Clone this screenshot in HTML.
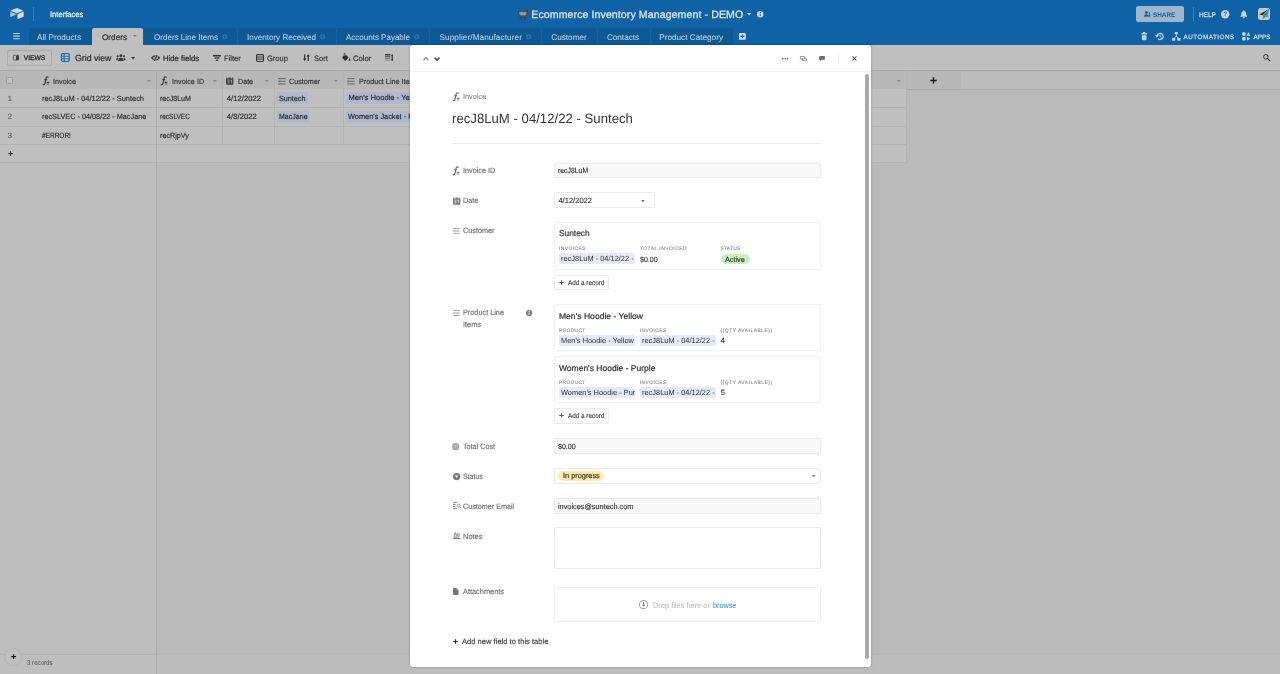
<!DOCTYPE html>
<html><head><meta charset="utf-8"><title>Orders - Airtable</title>
<style>
*{box-sizing:border-box;margin:0;padding:0}
html,body{width:1280px;height:674px;overflow:hidden;background:#bfbfbf;font-family:"Liberation Sans",sans-serif;font-size:8.6px;color:#2b2b2b}
.a{position:absolute;white-space:nowrap}
svg{position:absolute;overflow:visible}
#root{text-rendering:geometricPrecision;position:absolute;left:0;top:0;width:1280px;height:674px;overflow:hidden;will-change:transform}
</style></head><body>
<div id="root">
<div class="a" style="left:0px;top:0px;width:1280px;height:45px;background:#0e62a5"></div>
<svg style="left:9.6px;top:8.2px;" width="13.8" height="11.2" viewBox="0 0 138 112"><path d="M62 3 L8 25 Q4 27 8 29 L63 51 Q69 53 75 51 L130 29 Q134 27 130 25 L76 3 Q69 0 62 3Z" fill="#d3dae2"/><path d="M75 63 V108 Q75 112 79 110 L134 88 Q137 87 137 84 V39 Q137 35 133 37 L78 59 Q75 60 75 63Z" fill="#dbe0e6"/><path d="M62 65 L60 66 L8 91 Q3 93 3 88 V40 Q3 37 6 38 Q7 38 8 39 L61 60 Q66 62 62 65Z" fill="#b6c2cf"/></svg>
<div class="a" style="left:33px;top:7px;width:1px;height:13.5px;background:#3c80b7"></div>
<span class="a " style="left:50.4px;top:9.30px;line-height:12px;font-size:7.9px;color:#dfe7ef;transform:scaleX(0.9638);transform-origin:0 50%;-webkit-text-stroke:0.3px #dfe7ef;">Interfaces</span>
<svg style="left:517.5px;top:8.9px;" width="11.8" height="11" viewBox="0 0 23.6 22"><path d="M17.2 6 L19.4 1.6 L21.6 1" fill="none" stroke="#3c3c3c" stroke-width="1.7" stroke-linecap="round"/><circle cx="21.4" cy="1.9" r="1.9" fill="#a8372c"/><path d="M0.8 5 H18.4 L16 13.6 H3.4Z" fill="#858585" stroke="#353535" stroke-width="1.3" stroke-linejoin="round"/><path d="M2 8 H17.4 M2.8 10.8 H16.6 M6.4 5.4 L7 13.2 M10 5.4 V13.2 M13.8 5.4 L13.2 13.2" stroke="#a7a7a7" stroke-width="0.9" fill="none"/><path d="M3.8 13.8 L4.4 16.2 H15.6 L16 13.8" fill="none" stroke="#4c4c4c" stroke-width="1.5"/><circle cx="5.8" cy="19" r="2.3" fill="#2e2e2e"/><circle cx="14.2" cy="19" r="2.3" fill="#2e2e2e"/><circle cx="5.8" cy="19" r="0.9" fill="#9a9a9a"/><circle cx="14.2" cy="19" r="0.9" fill="#9a9a9a"/></svg>
<span class="a " style="left:531.25px;top:8.00px;line-height:14px;font-size:10.6px;color:#dde6ef;letter-spacing:0.081px;-webkit-text-stroke:0.28px #dde6ef;">Ecommerce Inventory Management - DEMO</span>
<svg style="left:747px;top:13px;" width="4.4" height="2.6" viewBox="0 0 10 6"><path d="M0 0H10L5 6Z" fill="#cfdce9"/></svg>
<svg style="left:757.3px;top:10.9px;" width="6.4" height="6.4" viewBox="0 0 16 16"><circle cx="8" cy="8" r="8" fill="#cfdce9"/><rect x="6.8" y="6.6" width="2.6" height="6" fill="#0e62a5"/><circle cx="8.1" cy="4.2" r="1.5" fill="#0e62a5"/></svg>
<div class="a" style="left:1135.6px;top:6px;width:48.2px;height:16px;background:#9fb6cd;border-radius:2px"></div>
<svg style="left:1143.6px;top:11px;" width="6.6" height="6" viewBox="0 0 22 20"><circle cx="8" cy="5" r="4.6" fill="#11609f"/><path d="M0 19 Q0 11 8 11 Q16 11 16 19Z" fill="#11609f"/><circle cx="18" cy="7" r="2.6" fill="#11609f"/><rect x="16.3" y="11" width="4.6" height="8" rx="1.5" fill="#11609f"/></svg>
<span class="a " style="left:1152.75px;top:9.50px;line-height:12px;font-size:6.5px;color:#11609f;font-weight:bold;transform:scaleX(0.9774);transform-origin:0 50%;">SHARE</span>
<div class="a" style="left:1193px;top:7px;width:1px;height:13.5px;background:#3c80b7"></div>
<span class="a " style="left:1198.75px;top:9.60px;line-height:12px;font-size:6.6px;color:#c9d9e8;transform:scaleX(0.9777);transform-origin:0 50%;-webkit-text-stroke:0.3px #c9d9e8;">HELP</span>
<svg style="left:1220.8px;top:9.8px;" width="8.4" height="8.4" viewBox="0 0 20 20"><circle cx="10" cy="10" r="10" fill="#ccd3da"/><text x="10" y="15.2" text-anchor="middle" font-family="Liberation Sans" font-weight="bold" font-size="15" fill="#0e62a5">?</text></svg>
<svg style="left:1239.7px;top:10.0px;" width="7.6" height="8.5" viewBox="0 0 16 19"><path d="M8 0.5 Q9.4 0.5 9.4 2 Q13.4 3.4 13.4 8.2 Q13.4 12 15.6 14 V15 H0.4 V14 Q2.6 12 2.6 8.2 Q2.6 3.4 6.6 2 Q6.6 0.5 8 0.5Z" fill="#ccd3da"/><path d="M5.8 16.2 H10.2 Q10 18.6 8 18.6 Q6 18.6 5.8 16.2Z" fill="#ccd3da"/></svg>
<div class="a" style="left:1258px;top:7.75px;width:12px;height:12px;background:#c9c9c9;border-radius:2.5px;overflow:hidden"><svg style="left:0;top:0" width="12" height="12" viewBox="0 0 24 24"><path d="M22 2 L2 13 L9 14.5Z" fill="#262626"/><path d="M22 2 L9.5 15 L11 22 L14.5 17 L19 19Z" fill="#2a9fc4"/><path d="M22 2 L11 17 L11 22Z" fill="#1b7fa3"/></svg></div>
<svg style="left:13px;top:33.4px;" width="7" height="6.4" viewBox="0 0 14 13"><rect y="0" width="14" height="2.2" rx="1" fill="#c5d6e6"/><rect y="5.3" width="14" height="2.2" rx="1" fill="#c5d6e6"/><rect y="10.6" width="14" height="2.2" rx="1" fill="#c5d6e6"/></svg>
<div class="a" style="left:29px;top:27.5px;width:63px;height:17.5px;background:#0c5996;border-radius:2px 2px 0 0"></div>
<div class="a" style="left:144px;top:27.5px;width:92.5px;height:17.5px;background:#0c5996;border-radius:2px 2px 0 0"></div>
<div class="a" style="left:237.5px;top:27.5px;width:98.0px;height:17.5px;background:#0c5996;border-radius:2px 2px 0 0"></div>
<div class="a" style="left:336.5px;top:27.5px;width:92.0px;height:17.5px;background:#0c5996;border-radius:2px 2px 0 0"></div>
<div class="a" style="left:429.5px;top:27.5px;width:111.5px;height:17.5px;background:#0c5996;border-radius:2px 2px 0 0"></div>
<div class="a" style="left:542px;top:27.5px;width:54.5px;height:17.5px;background:#0c5996;border-radius:2px 2px 0 0"></div>
<div class="a" style="left:597.5px;top:27.5px;width:52.0px;height:17.5px;background:#0c5996;border-radius:2px 2px 0 0"></div>
<div class="a" style="left:650.5px;top:27.5px;width:82.0px;height:17.5px;background:#0c5996;border-radius:2px 2px 0 0"></div>
<div class="a" style="left:92.2px;top:27.5px;width:51.1px;height:17.5px;background:#bfbfbf;border-radius:2px 2px 0 0"></div>
<span class="a " style="left:37px;top:31.60px;line-height:12px;font-size:8.2px;color:#c6d6e5;letter-spacing:0.026px;-webkit-text-stroke:0.05px #c6d6e5;">All Products</span>
<span class="a " style="left:102px;top:31.50px;line-height:12px;font-size:8.2px;color:#1f1f1f;transform:scaleX(0.9988);transform-origin:0 50%;-webkit-text-stroke:0.14px #1f1f1f;">Orders</span>
<svg style="left:133px;top:34.6px;" width="3.8" height="2.4" viewBox="0 0 10 6"><path d="M0 0H10L5 6Z" fill="#7d7d7d"/></svg>
<span class="a " style="left:154px;top:31.60px;line-height:12px;font-size:8.2px;color:#c3d5e5;transform:scaleX(0.9834);transform-origin:0 50%;-webkit-text-stroke:0.05px #c3d5e5;">Orders Line Items</span>
<svg style="left:221.5px;top:33.9px;" width="5.4" height="5.4" viewBox="0 0 16 16"><circle cx="8" cy="8" r="8" fill="#2c6ea6"/><rect x="6.9" y="6.8" width="2.4" height="5.6" fill="#0c5996"/><circle cx="8.1" cy="4.4" r="1.4" fill="#0c5996"/></svg>
<span class="a " style="left:247px;top:31.60px;line-height:12px;font-size:8.2px;color:#c3d5e5;transform:scaleX(0.9844);transform-origin:0 50%;-webkit-text-stroke:0.05px #c3d5e5;">Inventory Received</span>
<svg style="left:319.5px;top:33.9px;" width="5.4" height="5.4" viewBox="0 0 16 16"><circle cx="8" cy="8" r="8" fill="#2c6ea6"/><rect x="6.9" y="6.8" width="2.4" height="5.6" fill="#0c5996"/><circle cx="8.1" cy="4.4" r="1.4" fill="#0c5996"/></svg>
<span class="a " style="left:346px;top:31.60px;line-height:12px;font-size:8.2px;color:#c3d5e5;transform:scaleX(0.9764);transform-origin:0 50%;-webkit-text-stroke:0.05px #c3d5e5;">Accounts Payable</span>
<svg style="left:413.5px;top:33.9px;" width="5.4" height="5.4" viewBox="0 0 16 16"><circle cx="8" cy="8" r="8" fill="#2c6ea6"/><rect x="6.9" y="6.8" width="2.4" height="5.6" fill="#0c5996"/><circle cx="8.1" cy="4.4" r="1.4" fill="#0c5996"/></svg>
<span class="a " style="left:439.5px;top:31.60px;line-height:12px;font-size:8.2px;color:#c3d5e5;letter-spacing:0.092px;-webkit-text-stroke:0.05px #c3d5e5;">Supplier/Manufacturer</span>
<svg style="left:525.5px;top:33.9px;" width="5.4" height="5.4" viewBox="0 0 16 16"><circle cx="8" cy="8" r="8" fill="#2c6ea6"/><rect x="6.9" y="6.8" width="2.4" height="5.6" fill="#0c5996"/><circle cx="8.1" cy="4.4" r="1.4" fill="#0c5996"/></svg>
<span class="a " style="left:551.25px;top:31.60px;line-height:12px;font-size:8.2px;color:#c3d5e5;letter-spacing:0.000px;-webkit-text-stroke:0.05px #c3d5e5;">Customer</span>
<span class="a " style="left:607px;top:31.60px;line-height:12px;font-size:8.2px;color:#c3d5e5;transform:scaleX(0.9903);transform-origin:0 50%;-webkit-text-stroke:0.05px #c3d5e5;">Contacts</span>
<span class="a " style="left:659.25px;top:31.60px;line-height:12px;font-size:8.2px;color:#c3d5e5;letter-spacing:0.002px;-webkit-text-stroke:0.05px #c3d5e5;">Product Category</span>
<svg style="left:738.75px;top:33.4px;" width="6.8" height="6.8" viewBox="0 0 14 14"><rect width="14" height="14" rx="2.4" fill="#cfdce9"/><path d="M7 3V11M3 7H11" stroke="#0e62a5" stroke-width="2.2"/></svg>
<svg style="left:1140.6px;top:32.2px;" width="6.4" height="8.4" viewBox="0 0 13 17"><rect x="3.6" y="0" width="5.8" height="2.6" rx="1" fill="#c3d4e5"/><rect x="0.6" y="2.2" width="11.8" height="3" rx="1.2" fill="#c3d4e5"/><rect x="1.8" y="6.4" width="9.4" height="10.2" rx="1.4" fill="#c3d4e5"/></svg>
<svg style="left:1155.4px;top:32.1px;" width="9" height="8.8" viewBox="0 0 18 17.6"><path d="M4 8.8 A6.2 6.2 0 1 1 6 13.4" fill="none" stroke="#c3d4e5" stroke-width="2.5"/><path d="M0 6.6 H8 L4 11.6Z" fill="#c3d4e5"/><path d="M10.2 5 V9.2 L13 11" fill="none" stroke="#c3d4e5" stroke-width="2"/></svg>
<svg style="left:1172px;top:32px;" width="8.6" height="9" viewBox="0 0 17 18"><rect x="5.4" y="0" width="6.2" height="4.6" rx="0.8" fill="#c3d4e5"/><path d="M8.5 4 V9 M8.5 8.2 L3.2 13 M8.5 8.2 L13.8 13" stroke="#c3d4e5" stroke-width="1.8" fill="none"/><rect x="0" y="12.2" width="6.4" height="5.2" rx="0.8" fill="#c3d4e5"/><rect x="10.6" y="12.2" width="6.4" height="5.2" rx="0.8" fill="#c3d4e5"/></svg>
<span class="a " style="left:1183.5px;top:32.20px;line-height:12px;font-size:6.3px;color:#c3d4e5;letter-spacing:0.513px;-webkit-text-stroke:0.3px #c3d4e5;">AUTOMATIONS</span>
<svg style="left:1242.2px;top:32.3px;" width="8.4" height="8.6" viewBox="0 0 17 17.4"><rect x="0.4" y="0.4" width="7" height="7" rx="1.4" fill="#c3d4e5"/><rect x="0.4" y="10" width="7" height="7" rx="1.4" fill="#c3d4e5"/><path d="M13 0 L17 7.4 H9Z" fill="#c3d4e5"/><path d="M10 9.6 L17 13.5 L10 17.4Z" fill="#c3d4e5"/></svg>
<span class="a " style="left:1253.5px;top:32.20px;line-height:12px;font-size:6.3px;color:#c3d4e5;letter-spacing:0.072px;-webkit-text-stroke:0.3px #c3d4e5;">APPS</span>
<div class="a" style="left:0px;top:45px;width:1280px;height:25px;background:#bfbfbf"></div>
<div class="a" style="left:7.2px;top:49.5px;width:44.4px;height:16.4px;border:1px solid #aaaaaa;border-radius:2px"></div>
<svg style="left:13.4px;top:55.2px;" width="6" height="5.4" viewBox="0 0 12 11"><rect x="0.6" y="0.6" width="10.8" height="9.8" rx="1.4" fill="none" stroke="#333" stroke-width="1.3"/><rect x="6.2" y="1" width="5" height="9" fill="#333"/></svg>
<span class="a " style="left:23.7px;top:53.40px;line-height:12px;font-size:6.7px;color:#2f2f2f;letter-spacing:0.007px;-webkit-text-stroke:0.32px #2f2f2f;">VIEWS</span>
<svg style="left:61.1px;top:53.1px;" width="8.7" height="8.9" viewBox="0 0 18 18"><rect x="1" y="1" width="16" height="16" rx="2.2" fill="#c9d2db" stroke="#1b66b3" stroke-width="2.4"/><path d="M1 6.6H17M1 11.6H17M6.6 1V17" stroke="#1b66b3" stroke-width="2.2" fill="none"/></svg>
<span class="a " style="left:75.2px;top:51.10px;line-height:14px;font-size:9.0px;color:#262626;transform:scaleX(0.9703);transform-origin:0 50%;-webkit-text-stroke:0.18px #262626;">Grid view</span>
<svg style="left:116.3px;top:54.1px;" width="9.8" height="7.2" viewBox="0 0 19 14"><circle cx="9.5" cy="3.4" r="2.9" fill="#3a3a3a"/><path d="M4.2 13.6 Q4.2 7.4 9.5 7.4 Q14.8 7.4 14.8 13.6Z" fill="#3a3a3a"/><circle cx="3.3" cy="4.6" r="2.1" fill="#3a3a3a"/><path d="M0 12 Q0 7.8 3.6 7.8 Q4.4 7.8 5 8.2 Q3.2 10 3.2 12Z" fill="#3a3a3a"/><circle cx="15.7" cy="4.6" r="2.1" fill="#3a3a3a"/><path d="M19 12 Q19 7.8 15.4 7.8 Q14.6 7.8 14 8.2 Q15.8 10 15.8 12Z" fill="#3a3a3a"/></svg>
<svg style="left:131.4px;top:56.6px;" width="4.2" height="2.6" viewBox="0 0 10 6"><path d="M0 0H10L5 6Z" fill="#3a3a3a"/></svg>
<svg style="left:151.1px;top:54.6px;" width="9.1" height="5.9" viewBox="0 0 18.2 11.8"><path d="M1.2 5.9 Q9.1 -2.6 17 5.9 Q9.1 14.4 1.2 5.9Z" fill="none" stroke="#2e2e2e" stroke-width="2.3"/><path d="M12.6 -0.6 L6.4 12.6" stroke="#bfbfbf" stroke-width="4.6"/><path d="M12.2 0.2 L6.6 11.8" stroke="#2e2e2e" stroke-width="2.2"/></svg>
<span class="a " style="left:162.7px;top:52.90px;line-height:12px;font-size:7.8px;color:#2a2a2a;transform:scaleX(0.9916);transform-origin:0 50%;-webkit-text-stroke:0.22px #2a2a2a;">Hide fields</span>
<svg style="left:213.3px;top:54.9px;" width="8.1" height="6.1" viewBox="0 0 16.2 12.2"><rect x="0" y="0" width="16.2" height="2.8" rx="1.2" fill="#2b2b2b"/><rect x="2.8" y="4.7" width="10.6" height="2.6" rx="1.2" fill="#4a4a4a"/><rect x="5.6" y="9.4" width="5" height="2.6" rx="1.2" fill="#333"/></svg>
<span class="a " style="left:224.4px;top:52.90px;line-height:12px;font-size:7.8px;color:#2a2a2a;transform:scaleX(0.9638);transform-origin:0 50%;-webkit-text-stroke:0.14px #2a2a2a;">Filter</span>
<svg style="left:255.75px;top:53.5px;" width="8.1" height="8.1" viewBox="0 0 16.2 16.2"><rect x="1.2" y="1.2" width="13.8" height="13.8" rx="2.4" fill="#c6c6c6" stroke="#333" stroke-width="2.4"/><path d="M2.4 6.1H13.8M2.4 10.3H13.8" stroke="#333" stroke-width="2"/></svg>
<span class="a " style="left:266.9px;top:52.90px;line-height:12px;font-size:7.8px;color:#2a2a2a;transform:scaleX(0.9644);transform-origin:0 50%;-webkit-text-stroke:0.14px #2a2a2a;">Group</span>
<svg style="left:303.1px;top:53.9px;" width="6.9" height="7.1" viewBox="0 0 13.8 14.2"><path d="M3.4 0.4 V11" stroke="#2b2b2b" stroke-width="2.3"/><path d="M0 9 H6.8 L3.4 13.8Z" fill="#2b2b2b"/><path d="M10.4 13.8 V3.2" stroke="#2b2b2b" stroke-width="2.3"/><path d="M7 5.2 H13.8 L10.4 0.4Z" fill="#2b2b2b"/></svg>
<span class="a " style="left:313.75px;top:52.90px;line-height:12px;font-size:7.8px;color:#2a2a2a;transform:scaleX(0.9607);transform-origin:0 50%;-webkit-text-stroke:0.14px #2a2a2a;">Sort</span>
<svg style="left:341.75px;top:53.3px;" width="8.5" height="8.1" viewBox="0 0 17 16.2"><path d="M6.6 2.4 L13.2 9 L7.6 14.8 Q6.6 15.8 5.6 14.8 L0.8 10 Q0 9 0.8 8Z" fill="#2b2b2b"/><path d="M6.6 2.4 L3.6 5.4 H9.6Z" fill="#8e8e8e"/><path d="M4.2 4.8 V1.8 Q4.2 0.2 5.6 0.6 L6.6 1.6" fill="none" stroke="#2b2b2b" stroke-width="1.3"/><path d="M15 10.4 Q17 13 17 14.2 Q17 16 15.2 16 Q13.4 16 13.4 14.2 Q13.4 13 15 10.4Z" fill="#2b2b2b"/></svg>
<span class="a " style="left:353px;top:52.90px;line-height:12px;font-size:7.8px;color:#2a2a2a;transform:scaleX(0.9871);transform-origin:0 50%;-webkit-text-stroke:0.14px #2a2a2a;">Color</span>
<svg style="left:385.4px;top:53.9px;" width="8.4" height="7.2" viewBox="0 0 16.8 14.4"><rect x="0" y="0.2" width="10.6" height="2.6" fill="#2b2b2b"/><rect x="0" y="4.2" width="10.6" height="2.2" fill="#555"/><rect x="0" y="7.8" width="10.6" height="2.2" fill="#777"/><rect x="0" y="11.4" width="10.6" height="2.2" fill="#8e8e8e"/><path d="M14.4 1.6 V12.8" stroke="#2b2b2b" stroke-width="2.2"/><path d="M12 3.4 L14.4 0 L16.8 3.4Z M12 11 L14.4 14.4 L16.8 11Z" fill="#2b2b2b"/></svg>
<svg style="left:1262.6px;top:54.2px;" width="7.4" height="7.4" viewBox="0 0 15 15"><circle cx="5.8" cy="5.8" r="4.6" fill="none" stroke="#333" stroke-width="2"/><path d="M9.2 9.2 L14 14" stroke="#333" stroke-width="2.4" stroke-linecap="round"/></svg>
<div class="a" style="left:0px;top:70px;width:1280px;height:604px;background:#b9b9b9"></div>
<div class="a" style="left:0px;top:70px;width:156.5px;height:604px;background:#bdbdbd"></div>
<div class="a" style="left:0px;top:70px;width:1280px;height:20.1px;background:#bcbcbc;border-top:1px solid #a8a8a8;border-bottom:1px solid #a9a9a9"></div>
<div class="a" style="left:0px;top:70px;width:960px;height:20.1px;background:#b8b8b8;border-top:1px solid #a8a8a8;border-bottom:1px solid #a9a9a9"></div>
<div class="a" style="left:0px;top:89px;width:907px;height:73.6px;background:#bfbfbf"></div>
<div class="a" style="left:0px;top:107.1px;width:907px;height:1px;background:#b3b3b3"></div>
<div class="a" style="left:0px;top:125.8px;width:907px;height:1px;background:#b3b3b3"></div>
<div class="a" style="left:0px;top:144.4px;width:907px;height:1px;background:#b3b3b3"></div>
<div class="a" style="left:0px;top:162.0px;width:907px;height:1px;background:#b3b3b3"></div>
<div class="a" style="left:221.9px;top:70px;width:1px;height:75px;background:#b3b3b3"></div>
<div class="a" style="left:273.8px;top:70px;width:1px;height:75px;background:#b3b3b3"></div>
<div class="a" style="left:342.7px;top:70px;width:1px;height:75px;background:#b3b3b3"></div>
<div class="a" style="left:156px;top:70px;width:1px;height:604px;background:#ababab"></div>
<div class="a" style="left:906.2px;top:70px;width:1px;height:93px;background:#b3b3b3"></div>
<div class="a" style="left:959.6px;top:70px;width:1px;height:19px;background:#b3b3b3"></div>
<div class="a" style="left:5.6px;top:76.8px;width:7px;height:7px;border:1px solid #a0a0a0;border-radius:1.5px;background:#c0c0c0"></div>
<svg style="left:42.6px;top:75.7px;" width="6.3" height="9.4" viewBox="0 0 8 12"><path d="M6.6 1.6 Q4.3 0.3 3.8 3.2 L2.5 9.4 Q2 11.9 0.2 10.8" fill="none" stroke="#333" stroke-width="1.5" stroke-linecap="round"/><path d="M1.5 4.7 H5.4" stroke="#333" stroke-width="1.3"/><path d="M4.9 7.6 L7.9 10.8 M7.9 7.6 L4.9 10.8" stroke="#333" stroke-width="1.35"/></svg>
<span class="a " style="left:53.1px;top:75.80px;line-height:12px;font-size:7.6px;color:#2c2c2c;transform:scaleX(0.9558);transform-origin:0 50%;-webkit-text-stroke:0.14px #2c2c2c;">Invoice</span>
<svg style="left:160.8px;top:75.7px;" width="6.3" height="9.4" viewBox="0 0 8 12"><path d="M6.6 1.6 Q4.3 0.3 3.8 3.2 L2.5 9.4 Q2 11.9 0.2 10.8" fill="none" stroke="#333" stroke-width="1.5" stroke-linecap="round"/><path d="M1.5 4.7 H5.4" stroke="#333" stroke-width="1.3"/><path d="M4.9 7.6 L7.9 10.8 M7.9 7.6 L4.9 10.8" stroke="#333" stroke-width="1.35"/></svg>
<span class="a " style="left:171.9px;top:75.80px;line-height:12px;font-size:7.6px;color:#2c2c2c;transform:scaleX(0.9507);transform-origin:0 50%;-webkit-text-stroke:0.14px #2c2c2c;">Invoice ID</span>
<svg style="left:226.4px;top:76.69999999999999px;" width="7.4" height="7.8" viewBox="0 0 14 15"><rect x="0" y="1" width="14" height="14" rx="1.8" fill="#3a3a3a"/><rect x="2.6" y="0" width="2" height="2.6" fill="#b8b8b8"/><rect x="9.4" y="0" width="2" height="2.6" fill="#b8b8b8"/><path d="M2.4 6 H5.6 V8.6 H3.6 M5.6 8.6 V11.6 H2.4" fill="none" stroke="#b8b8b8" stroke-width="1.3"/><path d="M8.6 7 L10.4 5.8 V12" fill="none" stroke="#b8b8b8" stroke-width="1.4"/><rect x="0" y="3.2" width="14" height="1" fill="#b8b8b8" opacity=".55"/></svg>
<span class="a " style="left:237.5px;top:75.80px;line-height:12px;font-size:7.6px;color:#2c2c2c;transform:scaleX(0.9410);transform-origin:0 50%;-webkit-text-stroke:0.14px #2c2c2c;">Date</span>
<svg style="left:278.2px;top:77.5px;" width="7.8" height="6.6" viewBox="0 0 16 13.4"><path d="M0.4 1.2H15.6M6.4 6.7H15.6M0.4 12.2H15.6" stroke="#3c3c3c" stroke-width="1.35"/><path d="M0 6.7H5" stroke="#3c3c3c" stroke-width="1.3"/><path d="M3 4.6 L5.2 6.7 L3 8.8" stroke="#3c3c3c" stroke-width="1.1" fill="none"/></svg>
<span class="a " style="left:289.4px;top:75.80px;line-height:12px;font-size:7.6px;color:#2c2c2c;transform:scaleX(0.9447);transform-origin:0 50%;-webkit-text-stroke:0.14px #2c2c2c;">Customer</span>
<svg style="left:346.8px;top:77.5px;" width="7.8" height="6.6" viewBox="0 0 16 13.4"><path d="M0.4 1.2H15.6M6.4 6.7H15.6M0.4 12.2H15.6" stroke="#3c3c3c" stroke-width="1.35"/><path d="M0 6.7H5" stroke="#3c3c3c" stroke-width="1.3"/><path d="M3 4.6 L5.2 6.7 L3 8.8" stroke="#3c3c3c" stroke-width="1.1" fill="none"/></svg>
<span class="a " style="left:358.6px;top:75.80px;line-height:12px;font-size:7.6px;color:#2c2c2c;transform:scaleX(.95);transform-origin:0 50%;-webkit-text-stroke:0.14px #2c2c2c;">Product Line Items</span>
<svg style="left:147.4px;top:80.0px;" width="3.8" height="2.4" viewBox="0 0 10 6"><path d="M0 0H10L5 6Z" fill="#878787"/></svg>
<svg style="left:213.0px;top:80.0px;" width="3.8" height="2.4" viewBox="0 0 10 6"><path d="M0 0H10L5 6Z" fill="#878787"/></svg>
<svg style="left:264.8px;top:80.0px;" width="3.8" height="2.4" viewBox="0 0 10 6"><path d="M0 0H10L5 6Z" fill="#878787"/></svg>
<svg style="left:333.70000000000005px;top:80.0px;" width="3.8" height="2.4" viewBox="0 0 10 6"><path d="M0 0H10L5 6Z" fill="#878787"/></svg>
<svg style="left:897.1px;top:80.0px;" width="3.8" height="2.4" viewBox="0 0 10 6"><path d="M0 0H10L5 6Z" fill="#878787"/></svg>
<svg style="left:929.6px;top:77.2px;" width="7" height="7" viewBox="0 0 14 14"><path d="M7 0.5V13.5M0.5 7H13.5" stroke="#1d1d1d" stroke-width="2.9"/></svg>
<span class="a " style="left:7.8px;top:92.50px;line-height:12px;font-size:7.6px;color:#5c5c5c;-webkit-text-stroke:0.14px #5c5c5c;">1</span>
<span class="a " style="left:7.8px;top:111.00px;line-height:12px;font-size:7.6px;color:#5c5c5c;-webkit-text-stroke:0.14px #5c5c5c;">2</span>
<span class="a " style="left:7.8px;top:129.60px;line-height:12px;font-size:7.6px;color:#5c5c5c;-webkit-text-stroke:0.14px #5c5c5c;">3</span>
<svg style="left:7.6px;top:150.6px;" width="5.2" height="5.2" viewBox="0 0 10 10"><path d="M5 0.5V9.5M0.5 5H9.5" stroke="#2a2a2a" stroke-width="1.9"/></svg>
<span class="a " style="left:42px;top:92.50px;line-height:12px;font-size:7.6px;color:#262626;transform:scaleX(0.9783);transform-origin:0 50%;-webkit-text-stroke:0.14px #262626;">recJ8LuM - 04/12/22 - Suntech</span>
<span class="a " style="left:42px;top:111.00px;line-height:12px;font-size:7.6px;color:#262626;transform:scaleX(0.9589);transform-origin:0 50%;-webkit-text-stroke:0.14px #262626;">recSLVEC - 04/08/22 - MacJane</span>
<span class="a " style="left:42px;top:129.60px;line-height:12px;font-size:7.6px;color:#262626;transform:scaleX(0.8559);transform-origin:0 50%;-webkit-text-stroke:0.14px #262626;">#ERROR!</span>
<span class="a " style="left:160.4px;top:92.50px;line-height:12px;font-size:7.6px;color:#262626;transform:scaleX(0.9267);transform-origin:0 50%;-webkit-text-stroke:0.14px #262626;">recJ8LuM</span>
<span class="a " style="left:160.4px;top:111.00px;line-height:12px;font-size:7.6px;color:#262626;transform:scaleX(0.8570);transform-origin:0 50%;-webkit-text-stroke:0.14px #262626;">recSLVEC</span>
<span class="a " style="left:160.4px;top:129.60px;line-height:12px;font-size:7.6px;color:#262626;transform:scaleX(0.9466);transform-origin:0 50%;-webkit-text-stroke:0.14px #262626;">recRjpVy</span>
<span class="a " style="left:226.7px;top:92.50px;line-height:12px;font-size:7.6px;color:#262626;letter-spacing:0.078px;-webkit-text-stroke:0.14px #262626;">4/12/2022</span>
<span class="a " style="left:226.7px;top:111.00px;line-height:12px;font-size:7.6px;color:#262626;letter-spacing:0.080px;-webkit-text-stroke:0.14px #262626;">4/8/2022</span>
<div class="a" style="left:276.9px;top:92.2px;width:30.7px;height:11.8px;background:#b1b8cd;border-radius:2px"></div>
<span class="a " style="left:279.2px;top:92.50px;line-height:12px;font-size:7.6px;color:#1f1f1f;transform:scaleX(0.9471);transform-origin:0 50%;-webkit-text-stroke:0.14px #1f1f1f;">Suntech</span>
<div class="a" style="left:276.9px;top:110.8px;width:32.8px;height:11.8px;background:#b1b8cd;border-radius:2px"></div>
<span class="a " style="left:279.2px;top:111.10px;line-height:12px;font-size:7.6px;color:#1f1f1f;transform:scaleX(0.9277);transform-origin:0 50%;-webkit-text-stroke:0.14px #1f1f1f;">MacJane</span>
<div class="a" style="left:346.1px;top:92.2px;width:70px;height:11.8px;background:#b1b8cd;border-radius:2px"></div>
<span class="a " style="left:348.4px;top:92.20px;line-height:12px;font-size:7.6px;color:#1f1f1f;-webkit-text-stroke:0.14px #1f1f1f;">Men's Hoodie - Yellow</span>
<div class="a" style="left:346.1px;top:110.8px;width:70px;height:11.8px;background:#b1b8cd;border-radius:2px"></div>
<span class="a " style="left:348.4px;top:110.80px;line-height:12px;font-size:7.6px;color:#1f1f1f;transform:scaleX(.97);transform-origin:0 50%;-webkit-text-stroke:0.14px #1f1f1f;">Women's Jacket - Red</span>
<div class="a" style="left:0px;top:653.7px;width:1280px;height:20.3px;background:#bcbcbc;border-top:1px solid #b4b4b4"></div>
<div class="a" style="left:0px;top:654.7px;width:156px;height:19.3px;background:#bebebe"></div>
<div class="a" style="left:156px;top:654px;width:1px;height:20px;background:#ababab"></div>
<div class="a" style="left:4.2px;top:648px;width:17.8px;height:17.8px;background:#bfbfbf;border:1px solid #b4b4b4;border-radius:50%"></div>
<svg style="left:10.5px;top:654.3px;" width="5.2" height="5.2" viewBox="0 0 10 10"><path d="M5 0.3V9.7M0.3 5H9.7" stroke="#1d1d1d" stroke-width="2.5"/></svg>
<span class="a " style="left:26.7px;top:658.00px;line-height:12px;font-size:6.9px;color:#565656;transform:scaleX(0.8909);transform-origin:0 50%;-webkit-text-stroke:0.05px #565656;">3 records</span>
<div class="a" style="left:409.6px;top:44.8px;width:461.2px;height:622.2px;background:#fff;border-radius:3px;box-shadow:0 0 2.5px rgba(0,0,0,.28)"></div>
<div class="a" style="left:409.6px;top:71.2px;width:461.2px;height:1px;background:#f0f0f0"></div>
<svg style="left:422.8px;top:56.6px;" width="6" height="3.7" viewBox="0 0 12 7.4"><path d="M1 6.4 L6 1.4 L11 6.4" fill="none" stroke="#858585" stroke-width="2.5"/></svg>
<svg style="left:434.3px;top:57px;" width="6" height="3.8" viewBox="0 0 12 7.6"><path d="M1 1.2 L6 6.2 L11 1.2" fill="none" stroke="#555" stroke-width="3"/></svg>
<svg style="left:781.6px;top:58px;" width="6.6" height="1.6" viewBox="0 0 13 3"><circle cx="1.6" cy="1.5" r="1.6" fill="#4a4a4a"/><circle cx="6.5" cy="1.5" r="1.6" fill="#4a4a4a"/><circle cx="11.4" cy="1.5" r="1.6" fill="#4a4a4a"/></svg>
<svg style="left:800px;top:55.9px;" width="7" height="5.2" viewBox="0 0 14 10.4"><rect x="0.8" y="0.8" width="8" height="5.6" rx="1.3" fill="none" stroke="#666" stroke-width="1.5"/><rect x="5.2" y="4" width="8" height="5.6" rx="1.3" fill="none" stroke="#666" stroke-width="1.5"/><rect x="6.4" y="2" width="1.8" height="2.6" fill="#fff"/><rect x="5.8" y="5.6" width="1.8" height="2.6" fill="#fff" opacity="0"/></svg>
<svg style="left:819px;top:56px;" width="6" height="5.4" viewBox="0 0 13 12"><path d="M2 0 H11 Q13 0 13 2 V6.6 Q13 8.6 11 8.6 H6 L2.6 11.6 V8.6 H2 Q0 8.6 0 6.6 V2 Q0 0 2 0Z" fill="#6b6b6b"/></svg>
<div class="a" style="left:838px;top:54.4px;width:1px;height:8.6px;background:#eeeeee"></div>
<svg style="left:852px;top:56.2px;" width="5" height="5" viewBox="0 0 10 10"><path d="M1 1 L9 9 M9 1 L1 9" stroke="#3a3a3a" stroke-width="2.1"/></svg>
<div class="a" style="left:865.2px;top:74.4px;width:4.3px;height:585px;background:#a9a9a9;border-radius:2px"></div>
<svg style="left:452.7px;top:92.2px;" width="6.3" height="9.4" viewBox="0 0 8 12"><path d="M6.6 1.6 Q4.3 0.3 3.8 3.2 L2.5 9.4 Q2 11.9 0.2 10.8" fill="none" stroke="#666" stroke-width="1.5" stroke-linecap="round"/><path d="M1.5 4.7 H5.4" stroke="#666" stroke-width="1.3"/><path d="M4.9 7.6 L7.9 10.8 M7.9 7.6 L4.9 10.8" stroke="#666" stroke-width="1.35"/></svg>
<span class="a " style="left:462.8px;top:91.20px;line-height:12px;font-size:7.6px;color:#7c7c7c;transform:scaleX(0.9642);transform-origin:0 50%;-webkit-text-stroke:0.06px #7c7c7c;">Invoice</span>
<span class="a " style="left:452.1px;top:109.80px;line-height:18px;font-size:13.6px;color:#363636;transform:scaleX(0.9692);transform-origin:0 50%;-webkit-text-stroke:0px #363636;">recJ8LuM - 04/12/22 - Suntech</span>
<div class="a" style="left:452.7px;top:143px;width:368.3px;height:1px;background:#e9e9e9"></div>
<svg style="left:452.7px;top:166.20000000000002px;" width="6.3" height="9.4" viewBox="0 0 8 12"><path d="M6.6 1.6 Q4.3 0.3 3.8 3.2 L2.5 9.4 Q2 11.9 0.2 10.8" fill="none" stroke="#666" stroke-width="1.5" stroke-linecap="round"/><path d="M1.5 4.7 H5.4" stroke="#666" stroke-width="1.3"/><path d="M4.9 7.6 L7.9 10.8 M7.9 7.6 L4.9 10.8" stroke="#666" stroke-width="1.35"/></svg>
<span class="a " style="left:463px;top:165.20px;line-height:12px;font-size:7.7px;color:#6e6e6e;transform:scaleX(0.9419);transform-origin:0 50%;-webkit-text-stroke:0.14px #6e6e6e;">Invoice ID</span>
<div class="a" style="left:554px;top:162.6px;width:267px;height:15.4px;background:#f8f8f8;border:1px solid #e9e9e9;border-radius:2px"></div>
<span class="a " style="left:558.4px;top:165.30px;line-height:12px;font-size:7.5px;color:#333;transform:scaleX(0.9139);transform-origin:0 50%;-webkit-text-stroke:0.14px #333;">recJ8LuM</span>
<svg style="left:452.9px;top:197.0px;" width="7.4" height="7.8" viewBox="0 0 14 15"><rect x="0" y="1" width="14" height="14" rx="1.8" fill="#737373"/><rect x="2.6" y="0" width="2" height="2.6" fill="#fff"/><rect x="9.4" y="0" width="2" height="2.6" fill="#fff"/><path d="M2.4 6 H5.6 V8.6 H3.6 M5.6 8.6 V11.6 H2.4" fill="none" stroke="#fff" stroke-width="1.3"/><path d="M8.6 7 L10.4 5.8 V12" fill="none" stroke="#fff" stroke-width="1.4"/><rect x="0" y="3.2" width="14" height="1" fill="#fff" opacity=".55"/></svg>
<span class="a " style="left:463px;top:195.30px;line-height:12px;font-size:7.7px;color:#6e6e6e;transform:scaleX(0.9354);transform-origin:0 50%;-webkit-text-stroke:0.14px #6e6e6e;">Date</span>
<div class="a" style="left:554px;top:192.3px;width:101px;height:16px;background:#fff;border:1px solid #e8e8e8;border-radius:2px"></div>
<span class="a " style="left:558.4px;top:195.20px;line-height:12px;font-size:7.5px;color:#333;letter-spacing:0.025px;-webkit-text-stroke:0.14px #333;">4/12/2022</span>
<svg style="left:640.6px;top:199.8px;" width="3.6" height="2.4" viewBox="0 0 10 6"><path d="M0 0H10L5 6Z" fill="#707070"/></svg>
<svg style="left:452.9px;top:227.73846153846154px;" width="7.0" height="5.9230769230769225" viewBox="0 0 16 13.4"><path d="M0.4 1.2H15.6M6.4 6.7H15.6M0.4 12.2H15.6" stroke="#666" stroke-width="1.35"/><path d="M0 6.7H5" stroke="#666" stroke-width="1.3"/><path d="M3 4.6 L5.2 6.7 L3 8.8" stroke="#666" stroke-width="1.1" fill="none"/></svg>
<span class="a " style="left:463px;top:225.10px;line-height:12px;font-size:7.7px;color:#6e6e6e;transform:scaleX(0.9451);transform-origin:0 50%;-webkit-text-stroke:0.14px #6e6e6e;">Customer</span>
<div class="a" style="left:554px;top:222.4px;width:267.4px;height:47.2px;background:#fff;border:1px solid #f0f0f0;border-radius:2px"></div>
<span class="a " style="left:559px;top:227.30px;line-height:12px;font-size:8.5px;color:#333;transform:scaleX(0.9807);transform-origin:0 50%;-webkit-text-stroke:0.22px #333;">Suntech</span>
<span class="a " style="left:559px;top:245.60px;line-height:8px;font-size:4.9px;color:#8f8f8f;letter-spacing:0.453px;-webkit-text-stroke:0.14px #8f8f8f;">INVOICES</span>
<span class="a " style="left:639.8px;top:245.60px;line-height:8px;font-size:4.9px;color:#8f8f8f;letter-spacing:0.504px;-webkit-text-stroke:0.14px #8f8f8f;">TOTAL INVOICED</span>
<span class="a " style="left:720.5px;top:245.60px;line-height:8px;font-size:4.9px;color:#8f8f8f;letter-spacing:0.237px;-webkit-text-stroke:0.14px #8f8f8f;">STATUS</span>
<div class="a" style="left:559px;top:253.4px;width:76px;height:10.8px;background:#e5eafa;border-radius:2px;overflow:hidden"><span class="a" style="left:2.2px;top:-0.2px;line-height:12px;font-size:7.5px;color:#2f2f2f;letter-spacing:0.03px;transform:scaleX(.982);transform-origin:0 50%">recJ8LuM - 04/12/22 - Suntech</span></div>
<span class="a " style="left:640px;top:253.50px;line-height:12px;font-size:7.5px;color:#333;transform:scaleX(0.9371);transform-origin:0 50%;-webkit-text-stroke:0.14px #333;">$0.00</span>
<div class="a" style="left:720.6px;top:254px;width:29px;height:10.2px;background:#cdf0c2;border-radius:5.1px"></div>
<span class="a " style="left:725.2px;top:253.60px;line-height:12px;font-size:7.5px;color:#1c2b16;transform:scaleX(0.9688);transform-origin:0 50%;-webkit-text-stroke:0.14px #1c2b16;">Active</span>
<div class="a" style="left:554px;top:274.6px;width:54.6px;height:15.4px;background:#fff;border:1px solid #ebebeb;border-radius:2px"></div>
<svg style="left:559.1px;top:279.70000000000005px;" width="5" height="5" viewBox="0 0 10 10"><path d="M5 0.5V9.5M0.5 5H9.5" stroke="#555" stroke-width="1.9"/></svg>
<span class="a " style="left:567.7px;top:277.70px;line-height:12px;font-size:6.9px;color:#3c3c3c;transform:scaleX(0.9201);transform-origin:0 50%;-webkit-text-stroke:0.14px #3c3c3c;">Add a record</span>
<svg style="left:452.9px;top:309.53846153846155px;" width="7.0" height="5.9230769230769225" viewBox="0 0 16 13.4"><path d="M0.4 1.2H15.6M6.4 6.7H15.6M0.4 12.2H15.6" stroke="#666" stroke-width="1.35"/><path d="M0 6.7H5" stroke="#666" stroke-width="1.3"/><path d="M3 4.6 L5.2 6.7 L3 8.8" stroke="#666" stroke-width="1.1" fill="none"/></svg>
<span class="a " style="left:463px;top:306.90px;line-height:12px;font-size:7.7px;color:#6e6e6e;transform:scaleX(0.9497);transform-origin:0 50%;-webkit-text-stroke:0.14px #6e6e6e;">Product Line</span>
<span class="a " style="left:463px;top:318.70px;line-height:12px;font-size:7.7px;color:#6e6e6e;transform:scaleX(0.9576);transform-origin:0 50%;-webkit-text-stroke:0.14px #6e6e6e;">Items</span>
<svg style="left:526.2px;top:309.7px;" width="6.2" height="6.2" viewBox="0 0 16 16"><circle cx="8" cy="8" r="8" fill="#7b7b7b"/><rect x="6.8" y="6.8" width="2.5" height="5.6" fill="#fff"/><circle cx="8.05" cy="4.4" r="1.5" fill="#fff"/></svg>
<div class="a" style="left:554px;top:304.2px;width:267.4px;height:47.2px;background:#fff;border:1px solid #f0f0f0;border-radius:2px"></div>
<span class="a " style="left:559px;top:310.20px;line-height:12px;font-size:8.5px;color:#333;letter-spacing:0.030px;-webkit-text-stroke:0.22px #333;">Men's Hoodie - Yellow</span>
<span class="a " style="left:559px;top:328.40px;line-height:8px;font-size:4.9px;color:#8f8f8f;letter-spacing:0.345px;-webkit-text-stroke:0.14px #8f8f8f;">PRODUCT</span>
<span class="a " style="left:639.8px;top:328.40px;line-height:8px;font-size:4.9px;color:#8f8f8f;letter-spacing:0.428px;-webkit-text-stroke:0.14px #8f8f8f;">INVOICES</span>
<span class="a " style="left:720.5px;top:328.40px;line-height:8px;font-size:4.9px;color:#8f8f8f;letter-spacing:0.522px;-webkit-text-stroke:0.14px #8f8f8f;">{{QTY AVAILABLE}}</span>
<div class="a" style="left:559px;top:335.2px;width:76px;height:10.8px;background:#e5eafa;border-radius:2px;overflow:hidden"><span class="a" style="left:2.2px;top:-0.2px;line-height:12px;font-size:7.5px;color:#2f2f2f;letter-spacing:0.03px;transform:scaleX(.982);transform-origin:0 50%">Men's Hoodie - Yellow</span></div>
<div class="a" style="left:640px;top:335.2px;width:76px;height:10.8px;background:#e5eafa;border-radius:2px;overflow:hidden"><span class="a" style="left:2.2px;top:-0.2px;line-height:12px;font-size:7.5px;color:#2f2f2f;letter-spacing:0.03px;transform:scaleX(.982);transform-origin:0 50%">recJ8LuM - 04/12/22 - Suntech</span></div>
<span class="a " style="left:720.8px;top:335.30px;line-height:12px;font-size:7.5px;color:#333;-webkit-text-stroke:0.14px #333;">4</span>
<div class="a" style="left:554px;top:356px;width:267.4px;height:47.2px;background:#fff;border:1px solid #f0f0f0;border-radius:2px"></div>
<span class="a " style="left:559px;top:362.00px;line-height:12px;font-size:8.5px;color:#333;transform:scaleX(0.9996);transform-origin:0 50%;-webkit-text-stroke:0.22px #333;">Women's Hoodie - Purple</span>
<span class="a " style="left:559px;top:380.20px;line-height:8px;font-size:4.9px;color:#8f8f8f;letter-spacing:0.345px;-webkit-text-stroke:0.14px #8f8f8f;">PRODUCT</span>
<span class="a " style="left:639.8px;top:380.20px;line-height:8px;font-size:4.9px;color:#8f8f8f;letter-spacing:0.428px;-webkit-text-stroke:0.14px #8f8f8f;">INVOICES</span>
<span class="a " style="left:720.5px;top:380.20px;line-height:8px;font-size:4.9px;color:#8f8f8f;letter-spacing:0.522px;-webkit-text-stroke:0.14px #8f8f8f;">{{QTY AVAILABLE}}</span>
<div class="a" style="left:559px;top:387.0px;width:76px;height:10.8px;background:#e5eafa;border-radius:2px;overflow:hidden"><span class="a" style="left:2.2px;top:-0.2px;line-height:12px;font-size:7.5px;color:#2f2f2f;letter-spacing:0.03px;transform:scaleX(.982);transform-origin:0 50%">Women's Hoodie - Purple</span></div>
<div class="a" style="left:640px;top:387.0px;width:76px;height:10.8px;background:#e5eafa;border-radius:2px;overflow:hidden"><span class="a" style="left:2.2px;top:-0.2px;line-height:12px;font-size:7.5px;color:#2f2f2f;letter-spacing:0.03px;transform:scaleX(.982);transform-origin:0 50%">recJ8LuM - 04/12/22 - Suntech</span></div>
<span class="a " style="left:720.8px;top:387.10px;line-height:12px;font-size:7.5px;color:#333;-webkit-text-stroke:0.14px #333;">5</span>
<div class="a" style="left:554px;top:408.2px;width:54.6px;height:15.4px;background:#fff;border:1px solid #ebebeb;border-radius:2px"></div>
<svg style="left:559.1px;top:413.3px;" width="5" height="5" viewBox="0 0 10 10"><path d="M5 0.5V9.5M0.5 5H9.5" stroke="#555" stroke-width="1.9"/></svg>
<span class="a " style="left:567.7px;top:411.30px;line-height:12px;font-size:6.9px;color:#3c3c3c;transform:scaleX(0.9201);transform-origin:0 50%;-webkit-text-stroke:0.14px #3c3c3c;">Add a record</span>
<svg style="left:452.4px;top:442.6px;" width="7.4" height="7.4" viewBox="0 0 14 14"><circle cx="7" cy="7" r="6.8" fill="#9c9c9c"/><circle cx="7" cy="7" r="4.6" fill="none" stroke="#c4c4c4" stroke-width="1.1"/><path d="M2 5H12M1 7.6H13M2.2 10.2H11.8" stroke="#b4b4b4" stroke-width="0.8"/><text x="7" y="9.9" font-size="7.8" font-family="Liberation Sans" font-weight="bold" text-anchor="middle" fill="#cfcfcf">$</text></svg>
<span class="a " style="left:463px;top:440.60px;line-height:12px;font-size:7.7px;color:#6e6e6e;transform:scaleX(0.9360);transform-origin:0 50%;-webkit-text-stroke:0.14px #6e6e6e;">Total Cost</span>
<div class="a" style="left:554px;top:438px;width:267px;height:15.6px;background:#f8f8f8;border:1px solid #e9e9e9;border-radius:2px"></div>
<span class="a " style="left:558.4px;top:440.80px;line-height:12px;font-size:7.5px;color:#333;transform:scaleX(0.9371);transform-origin:0 50%;-webkit-text-stroke:0.14px #333;">$0.00</span>
<svg style="left:452.5px;top:472.9px;" width="7.2" height="7.2" viewBox="0 0 14 14"><circle cx="7" cy="7" r="7" fill="#737373"/><path d="M3.5 5.1 H10.5 L7 9.9Z" fill="#fff"/></svg>
<span class="a " style="left:463px;top:470.70px;line-height:12px;font-size:7.7px;color:#6e6e6e;transform:scaleX(0.9084);transform-origin:0 50%;-webkit-text-stroke:0.14px #6e6e6e;">Status</span>
<div class="a" style="left:554px;top:467.6px;width:267px;height:16.2px;background:#fff;border:1px solid #e8e8e8;border-radius:2px"></div>
<div class="a" style="left:558px;top:470.7px;width:46.3px;height:10.4px;background:#ffe9b3;border-radius:5.2px"></div>
<span class="a " style="left:563px;top:470.30px;line-height:12px;font-size:7.5px;color:#2b2410;transform:scaleX(0.9805);transform-origin:0 50%;-webkit-text-stroke:0.14px #2b2410;">In progress</span>
<svg style="left:811.6px;top:475.2px;" width="3.6" height="2.4" viewBox="0 0 10 6"><path d="M0 0H10L5 6Z" fill="#7a7a7a"/></svg>
<svg style="left:452.7px;top:502.2px;" width="7.8" height="7.6" viewBox="0 0 15.6 15.2"><path d="M0 1.2H7.6M0 5.2H5.2M0 9.2H5.2M0 13.2H7.6" stroke="#858585" stroke-width="2"/><circle cx="10.8" cy="7" r="2.9" fill="none" stroke="#858585" stroke-width="1.6"/><path d="M12.8 9.2 L15.2 12" stroke="#858585" stroke-width="1.8"/></svg>
<span class="a " style="left:463px;top:500.50px;line-height:12px;font-size:7.7px;color:#6e6e6e;transform:scaleX(0.9344);transform-origin:0 50%;-webkit-text-stroke:0.14px #6e6e6e;">Customer Email</span>
<div class="a" style="left:554px;top:497.8px;width:267px;height:15.8px;background:#f8f8f8;border:1px solid #e9e9e9;border-radius:2px"></div>
<span class="a " style="left:558.4px;top:500.70px;line-height:12px;font-size:7.5px;color:#333;transform:scaleX(0.9750);transform-origin:0 50%;-webkit-text-stroke:0.14px #333;">invoices@suntech.com</span>
<svg style="left:452.6px;top:532.4px;" width="7.8" height="7.2" viewBox="0 0 15.6 14.4"><path d="M0.6 10 H12.4 M0.6 13.2 H15" stroke="#787878" stroke-width="2.1"/><path d="M2 8 L4.8 0.8 L7.6 8 M3 5.6 H6.6" fill="none" stroke="#787878" stroke-width="1.5"/><path d="M9.4 8 V2.2 M9.4 4.4 Q11.4 2.6 13.2 4 Q14.8 5.8 13.2 7.4 Q11.4 8.6 9.4 7.2" fill="none" stroke="#787878" stroke-width="1.5"/></svg>
<span class="a " style="left:463px;top:531.10px;line-height:12px;font-size:7.7px;color:#6e6e6e;transform:scaleX(0.9705);transform-origin:0 50%;-webkit-text-stroke:0.14px #6e6e6e;">Notes</span>
<div class="a" style="left:554px;top:527.4px;width:267px;height:41.2px;background:#fff;border:1px solid #e8e8e8;border-radius:2px"></div>
<svg style="left:453.4px;top:588px;" width="5.6" height="7" viewBox="0 0 11 14"><path d="M1.4 0 H7 L11 4 V12.6 Q11 14 9.6 14 H1.4 Q0 14 0 12.6 V1.4 Q0 0 1.4 0Z" fill="#777"/><path d="M7 0 V4 H11Z" fill="#b5b5b5"/></svg>
<span class="a " style="left:463px;top:586.00px;line-height:12px;font-size:7.7px;color:#6e6e6e;transform:scaleX(0.9594);transform-origin:0 50%;-webkit-text-stroke:0.14px #6e6e6e;">Attachments</span>
<div class="a" style="left:554px;top:587.4px;width:267px;height:34.2px;background:#fff;border:1px solid #ececec;border-radius:2px"></div>
<svg style="left:638.8px;top:600.1px;" width="9.2" height="9.2" viewBox="0 0 18 18"><circle cx="9" cy="9" r="7.9" fill="none" stroke="#959595" stroke-width="1.9"/><path d="M5.6 9.4 L9 13 L12.4 9.4Z" fill="#8a8a8a"/><path d="M7.6 4.4 H10.4 V9.6 H7.6Z" fill="#8a8a8a"/></svg>
<span class="a " style="left:652.9px;top:599.70px;line-height:12px;font-size:8.0px;color:#b3b3b3;transform:scaleX(0.9273);transform-origin:0 50%;-webkit-text-stroke:0px #b3b3b3;">Drop files here or</span>
<span class="a " style="left:712.6px;top:599.70px;line-height:12px;font-size:8.0px;color:#3d87fa;transform:scaleX(0.9071);transform-origin:0 50%;-webkit-text-stroke:0.05px #3d87fa;">browse</span>
<svg style="left:453.2px;top:639.3px;" width="5" height="5" viewBox="0 0 10 10"><path d="M5 0.3V9.7M0.3 5H9.7" stroke="#2e2e2e" stroke-width="2.4"/></svg>
<span class="a " style="left:462px;top:636.20px;line-height:12px;font-size:7.7px;color:#3a3a3a;transform:scaleX(0.9862);transform-origin:0 50%;-webkit-text-stroke:0.14px #3a3a3a;">Add new field to this table</span>
</div>
</body></html>
